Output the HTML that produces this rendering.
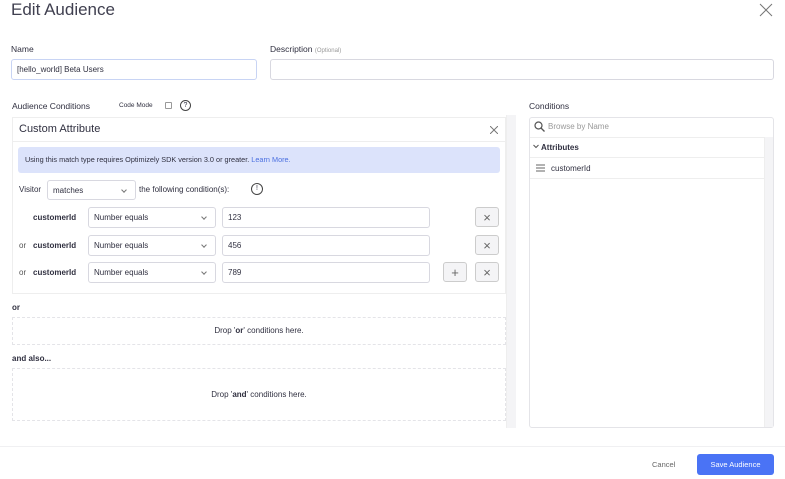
<!DOCTYPE html>
<html><head><style>
*{box-sizing:border-box;margin:0;padding:0}
body{width:785px;height:479px;background:#fff;font-family:"Liberation Sans",sans-serif;color:#303040;position:relative;overflow:hidden;font-size:8px}
.a{position:absolute}
.inp{position:absolute;border:1px solid #d8d8e0;border-radius:3px;background:#fff;font-size:8px;padding-left:5px;display:flex;align-items:center}
.sel::after{content:"";position:absolute;right:9px;top:7px;width:3px;height:3px;border-right:1px solid #777;border-bottom:1px solid #777;transform:rotate(45deg)}
.btn{position:absolute;width:24px;height:20px;border:1px solid #ccc;border-radius:3px;background:#f4f4f6;color:#666;font-size:13px;display:flex;align-items:center;justify-content:center}
.lbl{font-size:8px;font-weight:bold;color:#303040}
</style></head><body>
<div class="a" style="left:11px;top:0;font-size:17px;color:#404050">Edit Audience</div>
<svg class="a" style="left:759px;top:3px" width="14" height="14"><path d="M1 1L13 13M13 1L1 13" stroke="#777" stroke-width="1"/></svg>
<div class="a" style="left:11px;top:44px;font-size:8.5px">Name</div>
<div class="a" style="left:270px;top:44px;font-size:8.5px">Description <span style="font-size:6px;color:#999">(Optional)</span></div>
<div class="inp" style="left:11px;top:59px;width:246px;height:21px;border-color:#c8d4f4">[hello_world] Beta Users</div>
<div class="inp" style="left:270px;top:59px;width:504px;height:21px"></div>
<div class="a" style="left:12px;top:101px;font-size:8.5px">Audience Conditions</div>
<div class="a" style="left:119px;top:102px;font-size:6.5px">Code Mode</div>
<div class="a" style="left:165px;top:102px;width:7px;height:7px;border:1px solid #999;border-radius:1px"></div>
<div class="a" style="left:180px;top:100px;width:11px;height:11px;border:1px solid #444;border-radius:50%;font-size:7px;text-align:center;line-height:9px">?</div>
<div class="a" style="left:506px;top:115px;width:10px;height:313px;background:#f4f4f6;border-left:1px solid #eee"></div>
<div class="a" style="left:12px;top:117px;width:494px;height:177px;border:1px solid #eee;background:#fff"></div>
<div class="a" style="left:19px;top:123px;font-size:11px;color:#303040">Custom Attribute</div>
<svg class="a" style="left:490px;top:126px" width="8" height="8"><path d="M0 0L8 8M8 0L0 8" stroke="#777"/></svg>
<div class="a" style="left:12px;top:141px;width:494px;height:1px;background:#eee"></div>
<div class="a" style="left:18px;top:147px;width:482px;height:26px;background:#dce3fb;border-radius:3px;font-size:7.3px;padding:8px 7px">Using this match type requires Optimizely SDK version 3.0 or greater. <span style="color:#4a6fe0">Learn More.</span></div>
<div class="a" style="left:19px;top:185px;font-size:8px">Visitor</div>
<div class="inp sel" style="left:47px;top:180px;width:89px;height:20px">matches</div>
<div class="a" style="left:139px;top:185px;font-size:8px">the following condition(s):</div>
<div class="a" style="left:251px;top:183px;width:12px;height:12px;border:1px solid #444;border-radius:50%;font-size:7px;text-align:center;line-height:10px">!</div>

<div class="a lbl" style="left:33px;top:213px">customerId</div>
<div class="inp sel" style="left:88px;top:207px;width:128px;height:21px">Number equals</div>
<div class="inp" style="left:222px;top:207px;width:208px;height:21px">123</div>
<div class="btn" style="left:475px;top:207px">×</div>

<div class="a" style="left:19px;top:241px;font-size:8px;color:#555">or</div>
<div class="a lbl" style="left:33px;top:241px">customerId</div>
<div class="inp sel" style="left:88px;top:235px;width:128px;height:21px">Number equals</div>
<div class="inp" style="left:222px;top:235px;width:208px;height:21px">456</div>
<div class="btn" style="left:475px;top:235px">×</div>

<div class="a" style="left:19px;top:268px;font-size:8px;color:#555">or</div>
<div class="a lbl" style="left:33px;top:268px">customerId</div>
<div class="inp sel" style="left:88px;top:262px;width:128px;height:21px">Number equals</div>
<div class="inp" style="left:222px;top:262px;width:208px;height:21px">789</div>
<div class="btn" style="left:443px;top:262px">+</div>
<div class="btn" style="left:475px;top:262px">×</div>

<div class="a lbl" style="left:12px;top:303px">or</div>
<div class="a" style="left:12px;top:317px;width:494px;height:28px;border:1px dashed #e4e4e8;text-align:center;font-size:8px;line-height:26px">Drop '<b>or</b>' conditions here.</div>
<div class="a lbl" style="left:12px;top:354px">and also...</div>
<div class="a" style="left:12px;top:368px;width:494px;height:53px;border:1px dashed #e4e4e8;text-align:center;font-size:8px;line-height:51px">Drop '<b>and</b>' conditions here.</div>

<div class="a" style="left:529px;top:101px;font-size:8.5px">Conditions</div>
<div class="a" style="left:529px;top:117px;width:245px;height:311px;border:1px solid #e4e4e8;border-radius:3px"></div>
<div class="a" style="left:764px;top:137px;width:9px;height:290px;background:#f4f4f6;border-left:1px solid #eee"></div>
<svg class="a" style="left:534px;top:121px" width="11" height="11"><circle cx="4.5" cy="4.5" r="3.5" stroke="#555" fill="none" stroke-width="1.2"/><path d="M7 7L10.5 10.5" stroke="#555" stroke-width="1.3"/></svg>
<div class="a" style="left:548px;top:122px;font-size:8px;color:#999">Browse by Name</div>
<div class="a" style="left:530px;top:137px;width:234px;height:1px;background:#eee"></div>
<svg class="a" style="left:533px;top:144px" width="6" height="5"><path d="M0.5 1L3 3.5L5.5 1" stroke="#555" fill="none"/></svg>
<div class="a lbl" style="left:541px;top:143px">Attributes</div>
<div class="a" style="left:530px;top:157px;width:234px;height:1px;background:#eee"></div>
<svg class="a" style="left:536px;top:164px" width="9" height="8"><path d="M0 1H9M0 4H9M0 7H9" stroke="#666"/></svg>
<div class="a" style="left:551px;top:164px;font-size:8px">customerId</div>
<div class="a" style="left:530px;top:178px;width:234px;height:1px;background:#eee"></div>

<div class="a" style="left:0;top:446px;width:785px;height:1px;background:#f0f0f2"></div>
<div class="a" style="left:652px;top:460px;font-size:7.5px;color:#666">Cancel</div>
<div class="a" style="left:697px;top:454px;width:77px;height:21px;background:#4a73f5;border-radius:3px;color:#fff;font-size:7.5px;text-align:center;line-height:21px">Save Audience</div>
</body></html>
